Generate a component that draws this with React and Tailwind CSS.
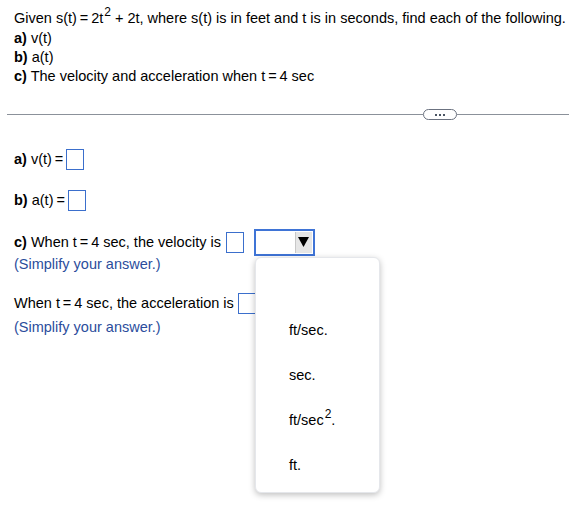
import { useState } from 'react'

function AnswerBox({ className = '' }) {
  return <span className={`inline-block w-[18px] h-[21px] border border-[#3b6fcc] bg-white align-middle ${className}`} />
}

function Sup({ children }) {
  return <span className="text-[12px] relative -top-[7px] ml-[1px]">{children}</span>
}

const options = [
  { key: 'fts', label: <>ft/sec.</> },
  { key: 's', label: <>sec.</> },
  { key: 'fts2', label: <>ft/sec<Sup>2</Sup>.</> },
  { key: 'ft', label: <>ft.</> },
]

export default function App() {
  const [open] = useState(true)

  return (
    <div className="w-[576px] h-[506px] bg-white text-black text-[14.5px] leading-[19px] font-['Liberation_Sans',Arial,sans-serif] relative overflow-hidden whitespace-nowrap">
      <div className="px-[14px] pt-[9px]">
        <p>
          Given s(t){'\u2009'}={'\u2009'}2t<Sup>2</Sup> + 2t, where s(t) is in feet and t is in seconds, find each of the following.
        </p>
        <p><b>a)</b> v(t)</p>
        <p><b>b)</b> a(t)</p>
        <p><b>c)</b> The velocity and acceleration when t{'\u2009'}={'\u2009'}4 sec</p>
      </div>

      <div className="mt-[23px] mx-[7px] flex items-center">
        <div className="h-px flex-1 bg-[#8b919a]" />
        <button className="w-[34px] h-[11px] rounded-full border border-[#6b7280] bg-white flex items-center justify-center gap-[2px]">
          <span className="w-[2px] h-[2px] bg-[#4b5563]" />
          <span className="w-[2px] h-[2px] bg-[#4b5563]" />
          <span className="w-[2px] h-[2px] bg-[#4b5563]" />
        </button>
        <div className="h-px w-[112px] bg-[#8b919a]" />
      </div>

      <div className="px-[14px] pt-[28px]">
        <div className="flex items-center gap-[3px] h-[22px]">
          <span><b>a)</b> v(t){'\u2009'}=</span>
          <AnswerBox />
        </div>
        <div className="flex items-center gap-[3px] h-[22px] mt-[19px]">
          <span><b>b)</b> a(t){'\u2009'}=</span>
          <AnswerBox />
        </div>

        <div className="flex items-center h-[26px] mt-[18px]">
          <span><b>c)</b> When t{'\u2009'}={'\u2009'}4 sec, the velocity is</span>
          <AnswerBox className="ml-[5px]" />
          <div className="ml-[10px] w-[61px] h-[27px] border-2 border-[#3f74d6] bg-white flex justify-end items-stretch p-[1px]">
            <div className="w-[17px] bg-[#e6e6e6] border-l border-[#c8c8c8] flex items-center justify-center">
              <svg width="11" height="10" viewBox="0 0 11 10"><path d="M0 0h11L5.5 10z" fill="#000" /></svg>
            </div>
          </div>
        </div>
        <p className="text-[#2b4d9c]">(Simplify your answer.)</p>

        <div className="flex items-center h-[24px] mt-[17px]">
          <span>When t{'\u2009'}={'\u2009'}4 sec, the acceleration is</span>
          <AnswerBox className="ml-[4px]" />
        </div>
        <p className="text-[#2b4d9c] mt-[3px]">(Simplify your answer.)</p>
      </div>

      {open && (
        <div className="absolute left-[255px] top-[257px] w-[125px] h-[236px] bg-white rounded-[6px] border border-[#e5e7eb] shadow-[0_2px_6px_rgba(0,0,0,0.25)] pl-[33px] pt-[63px]">
          {options.map((o) => (
            <div key={o.key} className="h-[45px]">{o.label}</div>
          ))}
        </div>
      )}
    </div>
  )
}
